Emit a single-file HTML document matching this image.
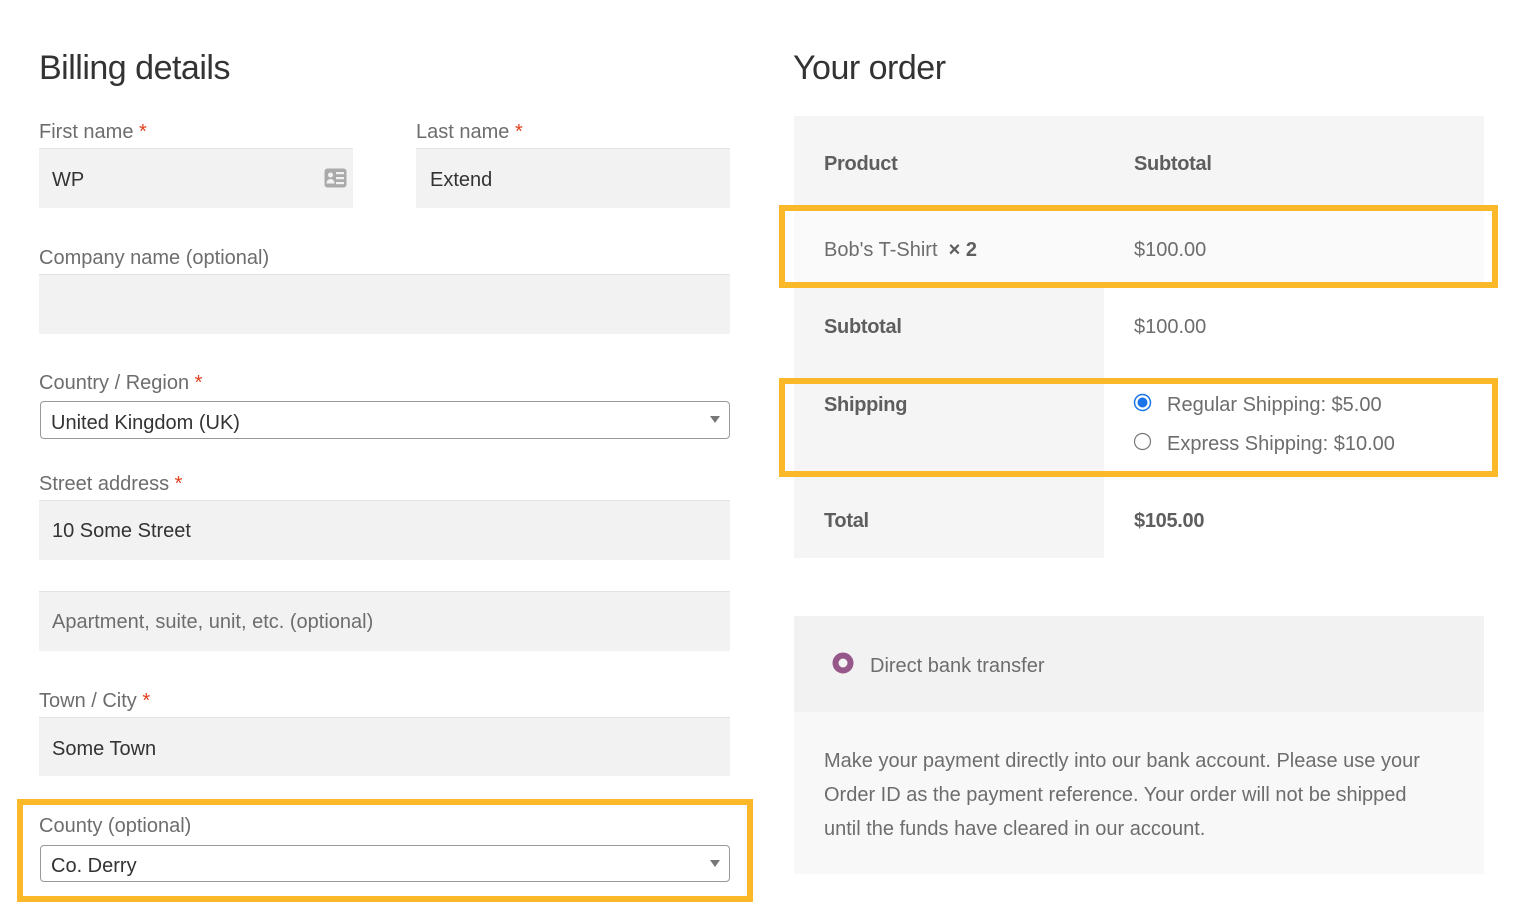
<!DOCTYPE html>
<html><head><meta charset="utf-8"><style>
*{margin:0;padding:0;box-sizing:border-box}
body{width:1536px;height:916px;background:#fff;position:relative;overflow:hidden;font-family:"Liberation Sans",sans-serif;color:#6d6d6d}
.a{position:absolute}
.t{position:absolute;white-space:nowrap;font-size:20px;line-height:24px;letter-spacing:0;margin-top:2px}
.h{font-size:34px;line-height:40px;color:#333;letter-spacing:-0.5px}
.d{color:#333}
.b{font-weight:bold;color:#5e5e5e;letter-spacing:-0.3px}
.in{position:absolute;background:#f2f2f2;border-top:1px solid #e2e2e2}
.sel{position:absolute;background:#fff;border:1px solid #999;border-radius:4px}
.sel:after{content:"";position:absolute;right:9px;top:14px;border-left:5px solid transparent;border-right:5px solid transparent;border-top:7px solid #777}
.req{color:#e2401c}
.ob{position:absolute;border:6px solid #fbb829}
</style></head><body>
<div class="t h" style="left:39px;top:46px">Billing details</div>
<div class="t h" style="left:793px;top:46px">Your order</div>

<div class="t" style="left:39px;top:118px">First name <span class="req">*</span></div>
<div class="t" style="left:416px;top:118px">Last name <span class="req">*</span></div>
<div class="in" style="left:39px;top:148px;width:314px;height:60px"></div>
<div class="in" style="left:416px;top:148px;width:314px;height:60px"></div>
<div class="t d" style="left:52px;top:166px">WP</div>
<div class="t d" style="left:430px;top:166px">Extend</div>
<svg class="a" style="left:324px;top:168px" width="23" height="20" viewBox="0 0 23 20"><rect x="0.5" y="0.5" width="22" height="19" rx="3" fill="#aaa"/><circle cx="6.5" cy="7" r="2.5" fill="#f2f2f2"/><path d="M2.5 15.5c0-3 2-4.5 4-4.5s4 1.5 4 4.5z" fill="#f2f2f2"/><rect x="12" y="4" width="8" height="2.2" fill="#f2f2f2"/><rect x="12" y="9" width="8" height="2.2" fill="#f2f2f2"/><rect x="12" y="14" width="8" height="2.2" fill="#f2f2f2"/></svg>

<div class="t" style="left:39px;top:244px">Company name (optional)</div>
<div class="in" style="left:39px;top:274px;width:691px;height:60px"></div>

<div class="t" style="left:39px;top:369px">Country / Region <span class="req">*</span></div>
<div class="sel" style="left:40px;top:401px;width:690px;height:38px"></div>
<div class="t d" style="left:51px;top:409px">United Kingdom (UK)</div>

<div class="t" style="left:39px;top:470px">Street address <span class="req">*</span></div>
<div class="in" style="left:39px;top:500px;width:691px;height:60px"></div>
<div class="t d" style="left:52px;top:517px">10 Some Street</div>
<div class="in" style="left:39px;top:591px;width:691px;height:60px"></div>
<div class="t" style="left:52px;top:608px">Apartment, suite, unit, etc. (optional)</div>

<div class="t" style="left:39px;top:687px">Town / City <span class="req">*</span></div>
<div class="in" style="left:39px;top:717px;width:691px;height:59px"></div>
<div class="t d" style="left:52px;top:735px">Some Town</div>

<div class="t" style="left:39px;top:812px">County (optional)</div>
<div class="sel" style="left:40px;top:845px;width:690px;height:37px"></div>
<div class="t d" style="left:51px;top:852px">Co. Derry</div>
<div class="ob" style="left:17px;top:799px;width:736px;height:103px"></div>

<!-- table -->
<div class="a" style="left:794px;top:116px;width:690px;height:89px;background:#f5f5f5"></div>
<div class="a" style="left:794px;top:205px;width:690px;height:82px;background:#fafafa"></div>
<div class="a" style="left:794px;top:287px;width:310px;height:271px;background:#f5f5f5"></div>
<div class="t b" style="left:824px;top:150px">Product</div>
<div class="t b" style="left:1134px;top:150px">Subtotal</div>
<div class="t" style="left:824px;top:236px">Bob's T-Shirt <b style="color:#5e5e5e">&nbsp;× 2</b></div>
<div class="t" style="left:1134px;top:236px">$100.00</div>
<div class="t b" style="left:824px;top:313px">Subtotal</div>
<div class="t" style="left:1134px;top:313px">$100.00</div>
<div class="t b" style="left:824px;top:391px">Shipping</div>
<svg class="a" style="left:1133px;top:393px" width="19" height="19"><circle cx="9.5" cy="9.5" r="8" fill="#fff" stroke="#1a73e8" stroke-width="1.5"/><circle cx="9.5" cy="9.5" r="5" fill="#1a73e8"/></svg>
<div class="t" style="left:1167px;top:391px">Regular Shipping: $5.00</div>
<svg class="a" style="left:1133px;top:432px" width="19" height="19"><circle cx="9.5" cy="9.5" r="8" fill="#fff" stroke="#777" stroke-width="1.2"/></svg>
<div class="t" style="left:1167px;top:430px">Express Shipping: $10.00</div>
<div class="t b" style="left:824px;top:507px">Total</div>
<div class="t b" style="left:1134px;top:507px">$105.00</div>
<div class="ob" style="left:779px;top:205px;width:719px;height:83px"></div>
<div class="ob" style="left:779px;top:378px;width:719px;height:99px"></div>

<!-- payment -->
<div class="a" style="left:794px;top:616px;width:690px;height:96px;background:#f2f2f2"></div>
<div class="a" style="left:794px;top:712px;width:690px;height:162px;background:#f8f8f8"></div>
<svg class="a" style="left:832px;top:652px" width="22" height="22"><circle cx="11" cy="11" r="7.5" fill="none" stroke="#96588a" stroke-width="6"/></svg>
<div class="t" style="left:870px;top:652px">Direct bank transfer</div>
<div class="t" style="left:824px;top:747px">Make your payment directly into our bank account. Please use your</div>
<div class="t" style="left:824px;top:781px">Order ID as the payment reference. Your order will not be shipped</div>
<div class="t" style="left:824px;top:815px">until the funds have cleared in our account.</div>
</body></html>
